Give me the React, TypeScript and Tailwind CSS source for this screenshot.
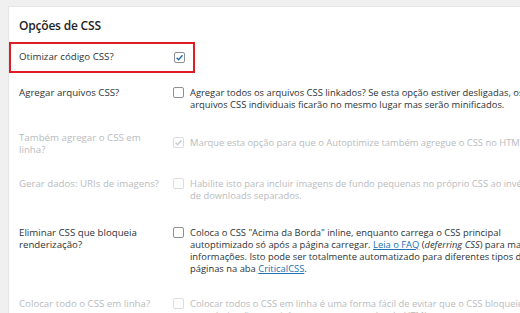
const font = { fontFamily: '"Open Sans", "Liberation Sans", sans-serif' }

const Box = ({ checked, disabled }: { checked?: boolean; disabled?: boolean }) => (
    <div
        className={`w-[11px] h-[11px] shrink-0 rounded-[2px] border flex items-center justify-center bg-white ${
            disabled ? "border-[#dcdcde]" : "border-[#8c8f94]"
        }`}
    >
        {checked && (
            <svg width="9" height="9" viewBox="0 0 10 10">
                <path
                    d="M1.8 5.2 L4 7.4 L8.3 2.4"
                    fill="none"
                    stroke={disabled ? "#c9cbcd" : "#2271b1"}
                    strokeWidth="1.6"
                />
            </svg>
        )}
    </div>
)

const Row = ({
    label,
    desc,
    checked,
    disabled,
    mt,
    descOffset,
}: {
    label: React.ReactNode[]
    desc: React.ReactNode[]
    checked?: boolean
    disabled?: boolean
    mt: string
    descOffset?: string
}) => (
    <div className={`flex items-start ${mt} ${disabled ? "text-[#b9bbbe]" : "text-[#2c3338]"}`}>
        <div className="w-[154px] shrink-0 leading-[12px] text-[9.7px]">
            {label.map((l, i) => (
                <div key={i} className="whitespace-nowrap">{l}</div>
            ))}
        </div>
        <div className={`flex items-start ${descOffset ?? ""}`}>
            <div className="mr-[6px]">
                <Box checked={checked} disabled={disabled} />
            </div>
            <div className="leading-[12px]">
                {desc.map((l, i) => (
                    <div key={i} className="whitespace-nowrap">{l}</div>
                ))}
            </div>
        </div>
    </div>
)

const Link = ({ children }: { children: React.ReactNode }) => (
    <span className="text-[#2271b1] underline">{children}</span>
)

export default function App() {
    return (
        <div className="w-[520px] h-[313px] overflow-hidden bg-[#f0f0f1] pt-[6px] pl-[8px] text-[9.4px]" style={font}>
            <div className="h-full bg-white border-t border-l border-[#e4e5e7]">
                <h2 className="pl-[10px] mt-[11px] text-[12px] leading-[16px] font-semibold text-[#1d2327] tracking-[-0.2px]">
                    Opções de CSS
                </h2>
                <div className="mt-[8px] w-[186px] h-[31px] border-2 border-[#dd1c24] flex items-center pl-[8px] text-[#2c3338] text-[9.7px]">
                    <div className="w-[155px]">Otimizar código CSS?</div>
                    <Box checked />
                </div>
                <div className="pl-[10px]">
                    <Row
                        mt="mt-[14px]"
                        label={["Agregar arquivos CSS?"]}
                        desc={[
                            "Agregar todos os arquivos CSS linkados? Se esta opção estiver desligadas, os",
                            "arquivos CSS individuais ficarão no mesmo lugar mas serão minificados.",
                        ]}
                    />
                    <Row
                        mt="mt-[21px]"
                        disabled
                        checked
                        descOffset="mt-[5px]"
                        label={["Também agregar o CSS em", "linha?"]}
                        desc={["Marque esta opção para que o Autoptimize também agregue o CSS no HTML."]}
                    />
                    <Row
                        mt="mt-[22px]"
                        disabled
                        label={["Gerar dados: URIs de imagens?"]}
                        desc={[
                            "Habilite isto para incluir imagens de fundo pequenas no próprio CSS ao invés",
                            "de downloads separados.",
                        ]}
                    />
                    <Row
                        mt="mt-[25px]"
                        label={["Eliminar CSS que bloqueia", "renderização?"]}
                        desc={[
                            "Coloca o CSS \"Acima da Borda\" inline, enquanto carrega o CSS principal",
                            <>
                                autoptimizado só após a página carregar. <Link>Leia o FAQ</Link> (<i>deferring CSS</i>) para mais
                            </>,
                            "informações. Isto pode ser totalmente automatizado para diferentes tipos de",
                            <>
                                páginas na aba <Link>CriticalCSS</Link>.
                            </>,
                        ]}
                    />
                    <Row
                        mt="mt-[23px]"
                        disabled
                        label={["Colocar todo o CSS em linha?"]}
                        desc={[
                            "Colocar todos o CSS em linha é uma forma fácil de evitar que o CSS bloqueie",
                            "a renderização, mas irá aumentar o tamanho do HTML.",
                        ]}
                    />
                </div>
            </div>
        </div>
    )
}
